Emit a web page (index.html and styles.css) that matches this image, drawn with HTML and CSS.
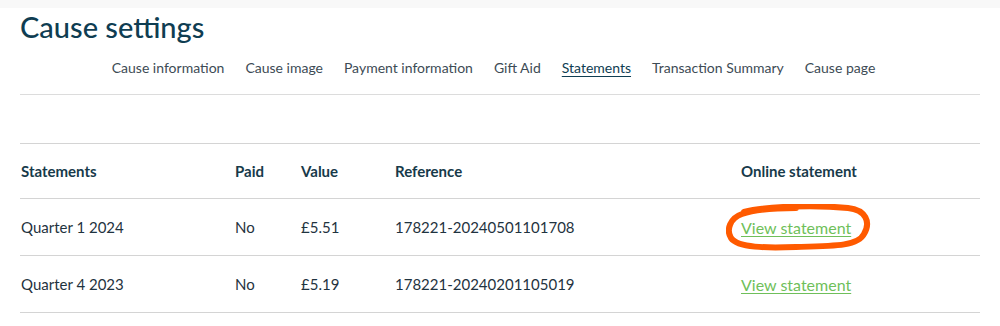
FILE: index.html
```html
<!DOCTYPE html>
<html lang="en">
<head>
    <meta charset="UTF-8">
    <meta name="viewport" content="width=device-width, initial-scale=1.0">
    <title>Cause settings</title>
    <link rel="stylesheet" href="styles.css">
</head>
<body>
    <div class="top-band"></div>
    <div class="container">
        <h1>Cause settings</h1>

        <nav class="tabs">
            <a href="#">Cause information</a>
            <a href="#">Cause image</a>
            <a href="#">Payment information</a>
            <a href="#">Gift Aid</a>
            <a href="#" class="active">Statements</a>
            <a href="#">Transaction Summary</a>
            <a href="#">Cause page</a>
        </nav>

        <table class="statements">
            <thead>
                <tr>
                    <th class="col-name">Statements</th>
                    <th class="col-paid">Paid</th>
                    <th class="col-value">Value</th>
                    <th class="col-ref">Reference</th>
                    <th class="col-online">Online statement</th>
                </tr>
            </thead>
            <tbody>
                <tr>
                    <td>Quarter 1 2024</td>
                    <td>No</td>
                    <td>£5.51</td>
                    <td>178221-20240501101708</td>
                    <td>
                        <span class="marked">
                            <a href="#" class="view-link">View statement</a>
                            <svg class="scribble" width="146" height="48" viewBox="0 0 146 48">
                                <path d="M18 8 C40 2 90 1 122 4 C140 6 145 18 138 30 C132 42 110 42 70 43 C40 44 12 44 5 34 C0 26 4 14 16 10 C30 5 50 4 70 4" fill="none" stroke="#ff5a00" stroke-width="6" stroke-linecap="round" stroke-linejoin="round"/>
                            </svg>
                        </span>
                    </td>
                </tr>
                <tr>
                    <td>Quarter 4 2023</td>
                    <td>No</td>
                    <td>£5.19</td>
                    <td>178221-20240201105019</td>
                    <td><a href="#" class="view-link">View statement</a></td>
                </tr>
            </tbody>
        </table>
    </div>
</body>
</html>
```

FILE: styles.css
```css
body {
    margin: 0;
    font-family: Lato, "Open Sans", sans-serif;
    color: #173a4a;
    background: #fff;
}
.top-band {
    height: 8px;
    background: #f8f8f8;
}
.container {
    padding: 0 20px;
}
h1 {
    margin: 0;
    padding-top: 2px;
    font-size: 29px;
    font-weight: 500;
    line-height: 34px;
    color: #0f3d52;
}
.tabs {
    display: flex;
    justify-content: center;
    gap: 21px;
    padding: 16px 13px 18px 0;
    border-bottom: 1px solid #dcdcdc;
    font-size: 14px;
    line-height: 16px;
}
.tabs a {
    color: #3d4b55;
    text-decoration: none;
}
.tabs a.active {
    color: #0f3d52;
    text-decoration: underline;
    text-underline-offset: 3px;
}
.statements {
    width: 100%;
    margin-top: 48px;
    border-collapse: collapse;
    font-size: 15px;
}
.statements th,
.statements td {
    text-align: left;
    padding: 0;
    border-top: 1px solid #d4d4d4;
    border-bottom: 1px solid #d4d4d4;
}
.statements th {
    height: 54px;
    font-weight: 700;
    color: #173a4a;
}
.statements td {
    height: 56px;
    color: #1f3340;
}
.col-name { width: 214px; }
.col-paid { width: 66px; }
.col-value { width: 94px; }
.col-ref { width: 346px; }
.statements th:first-child,
.statements td:first-child {
    padding-left: 1px;
}
.view-link {
    font-size: 16px;
    color: #6fbf5a;
    text-decoration: underline;
    text-underline-offset: 2px;
}
.marked {
    position: relative;
    display: inline-block;
}
.scribble {
    position: absolute;
    left: -15px;
    top: -14px;
    pointer-events: none;
}
```
